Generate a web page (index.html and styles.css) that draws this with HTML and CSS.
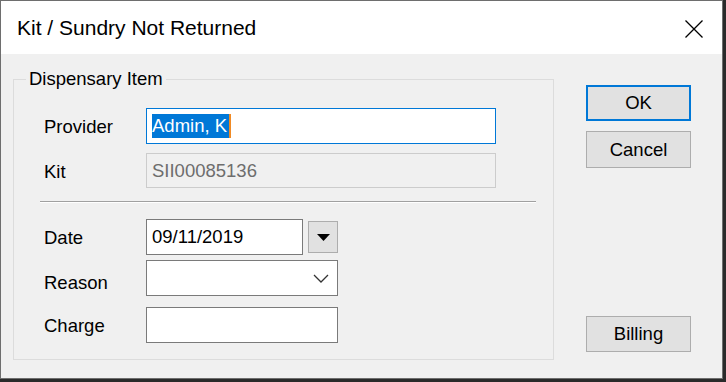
FILE: index.html
```html
<!DOCTYPE html>
<html lang="en">
<head>
<meta charset="utf-8">
<title>Kit / Sundry Not Returned</title>
<link rel="stylesheet" href="styles.css">
</head>
<body>
<div class="window">
  <div class="titlebar">
    <span class="title">Kit / Sundry Not Returned</span>
    <svg class="close" width="20" height="20" viewBox="0 0 20 20" aria-label="Close">
      <path d="M1.5 1.5 L18.5 18.5 M18.5 1.5 L1.5 18.5" stroke="#000" stroke-width="1.3" fill="none"/>
    </svg>
  </div>
  <div class="content">
    <fieldset class="group">
      <legend class="legend">Dispensary Item</legend>
      <div class="row row-provider">
        <span class="label">Provider</span>
        <div class="field field-wide field-focus"><span class="sel">Admin, K</span></div>
      </div>
      <div class="row row-kit">
        <span class="label">Kit</span>
        <div class="field field-wide field-disabled">SII00085136</div>
      </div>
      <div class="separator"></div>
      <div class="row row-date">
        <span class="label">Date</span>
        <div class="date-wrap">
          <div class="field field-date">09/11/2019</div>
          <div class="drop-btn">
            <svg width="13" height="7" viewBox="0 0 13 7"><path d="M0 0 H13 L6.5 7 Z" fill="#000"/></svg>
          </div>
        </div>
      </div>
      <div class="row row-reason">
        <span class="label">Reason</span>
        <div class="field field-short combo">
          <svg width="16" height="9" viewBox="0 0 16 9"><path d="M1 1 L8 8 L15 1" stroke="#333" stroke-width="1.3" fill="none"/></svg>
        </div>
      </div>
      <div class="row row-charge">
        <span class="label">Charge</span>
        <div class="field field-short"></div>
      </div>
    </fieldset>
    <div class="buttons">
      <div class="btn btn-default">OK</div>
      <div class="btn btn-cancel">Cancel</div>
      <div class="btn btn-billing">Billing</div>
    </div>
  </div>
</div>
</body>
</html>
```

FILE: styles.css
```css
html, body {
  margin: 0;
  padding: 0;
}
body {
  background: #2a2a2a;
  font-family: "Liberation Sans", Arial, sans-serif;
  color: #000;
  width: 726px;
  height: 382px;
  overflow: hidden;
}
.window {
  width: 721px;
  height: 377px;
  border: 1px solid #6e6e6e;
  background: #f0f0f0;
  display: flex;
  flex-direction: column;
}
.titlebar {
  height: 53px;
  background: #fff;
  display: flex;
  align-items: center;
  justify-content: space-between;
  padding: 0 18px 0 16px;
  flex: none;
}
.title {
  font-size: 21px;
}
.close {
  display: block;
  margin-top: 2px;
}
.content {
  display: flex;
  flex: 1;
}
.group {
  box-sizing: border-box;
  width: 541px;
  height: 292px;
  margin: 14px 0 0 12px;
  padding: 0 0 0 30px;
  border: 1px solid #dcdcdc;
  min-width: 0;
}
.legend {
  font-size: 18.5px;
  line-height: 22px;
  padding: 0 3px;
  margin-left: -18px;
}
.row {
  display: grid;
  grid-template-columns: 102px auto;
  align-items: center;
}
.label {
  font-size: 18.5px;
  line-height: 22px;
  padding-top: 2px;
}
.row-provider { margin-top: 18px; }
.row-kit { margin-top: 9px; }
.row-date { margin-top: 16px; }
.row-reason { margin-top: 5px; }
.row-reason .label { padding-top: 10px; }
.row-charge { margin-top: 11px; }
.field {
  box-sizing: border-box;
  height: 36px;
  border: 1px solid #7a7a7a;
  background: #fff;
  font-size: 18.5px;
  display: flex;
  align-items: center;
  padding-left: 5px;
}
.field-wide { width: 350px; }
.field-focus { border-color: #0078d7; }
.sel {
  background: #0078d7;
  color: #fff;
  line-height: 24px;
  padding-right: 2px;
  border-right: 2px solid #f08a24;
}
.field-disabled {
  border-color: #cccccc;
  background: #f0f0f0;
  color: #6d6d6d;
  height: 35px;
}
.separator {
  margin: 13px 17px 0 -4px;
  height: 1px;
  background: #a0a0a0;
  border-bottom: 1px solid #fff;
}
.date-wrap {
  display: flex;
  align-items: center;
  gap: 5px;
}
.field-date { width: 157px; }
.drop-btn {
  box-sizing: border-box;
  width: 30px;
  height: 32px;
  border: 1px solid #adadad;
  background: #e1e1e1;
  display: flex;
  align-items: center;
  justify-content: center;
}
.field-short { width: 192px; }
.combo {
  justify-content: flex-end;
  padding-right: 8px;
}
.buttons {
  display: flex;
  flex-direction: column;
  margin-left: 32px;
  padding-top: 31px;
}
.btn {
  box-sizing: border-box;
  width: 105px;
  height: 36px;
  border: 1px solid #adadad;
  background: #e1e1e1;
  font-size: 18.5px;
  display: flex;
  align-items: center;
  justify-content: center;
}
.btn-default {
  border: 2px solid #0078d7;
}
.btn-cancel { margin-top: 10px; height: 37px; }
.btn-billing { margin-top: auto; margin-bottom: 26px; }
```
